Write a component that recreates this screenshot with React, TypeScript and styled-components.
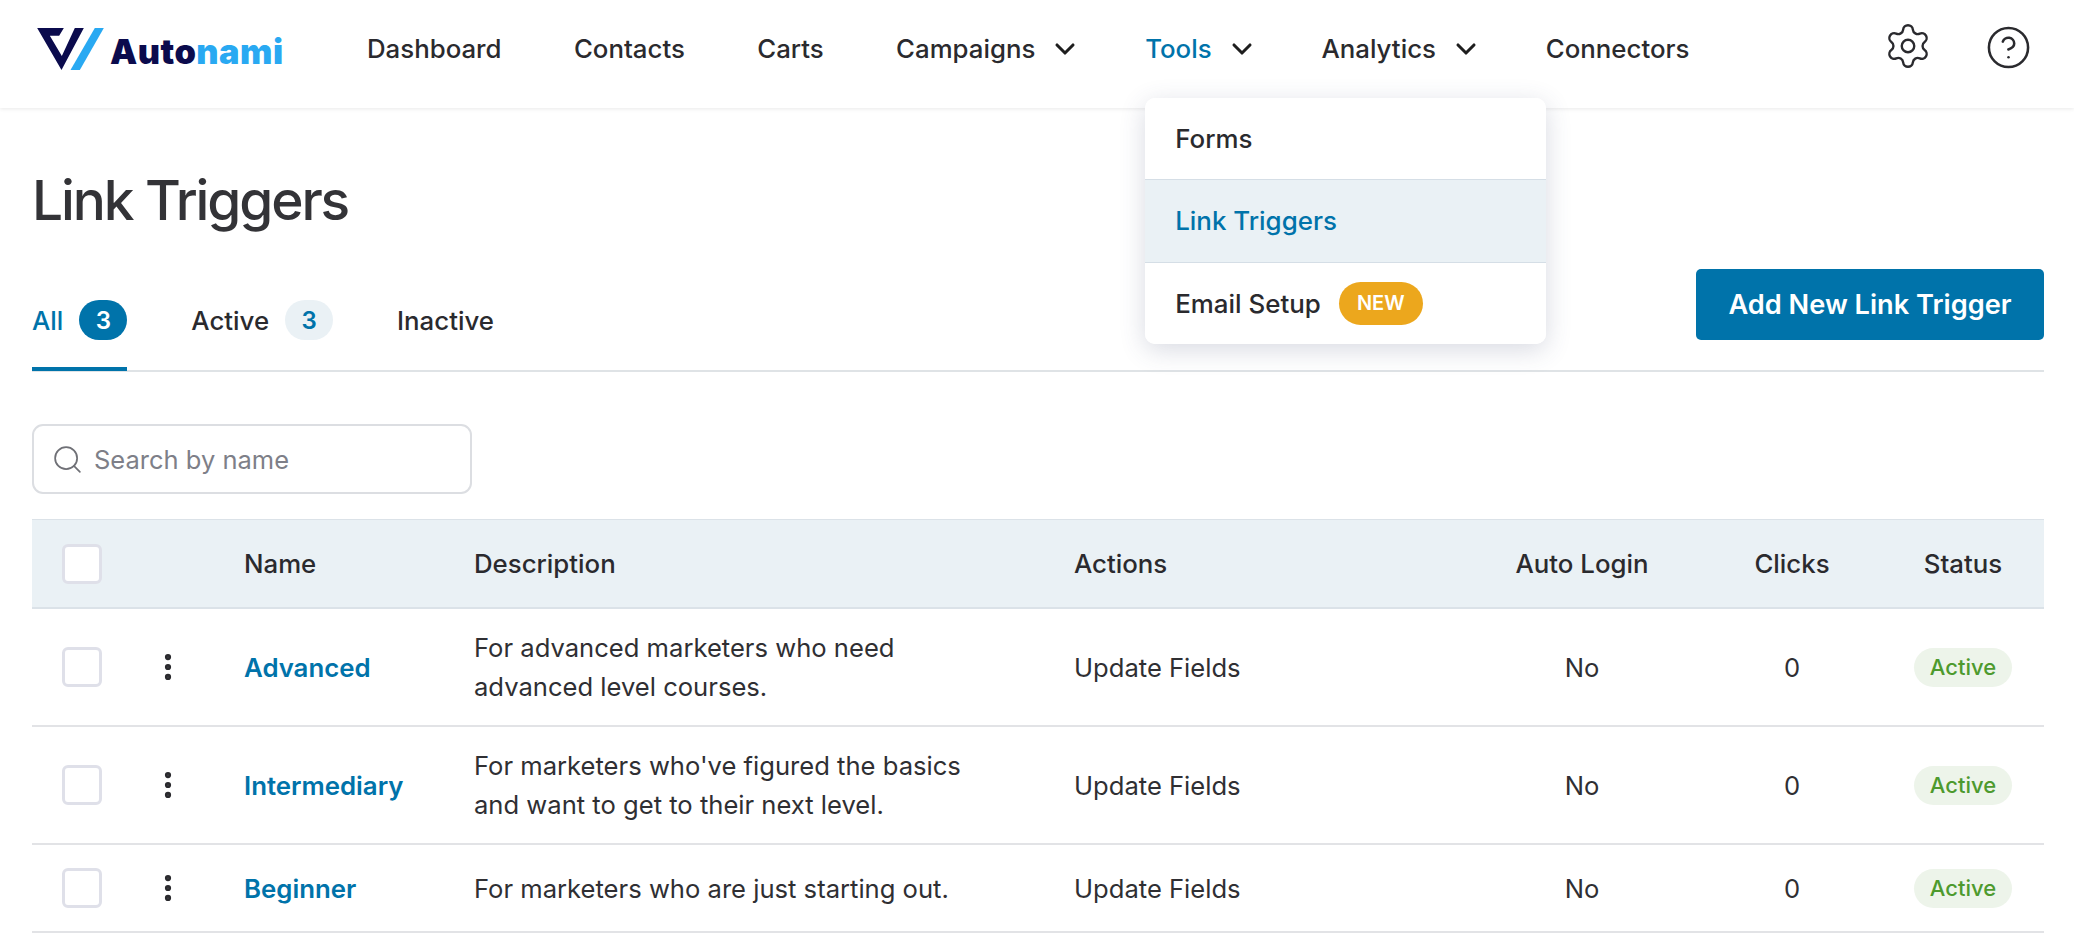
import styled, { createGlobalStyle } from 'styled-components';
import { ChevronDown, CircleHelp, EllipsisVertical, Search, Settings } from 'lucide-react';

const triggers = [
  {
    name: 'Advanced',
    lines: ['For advanced marketers who need', 'advanced level courses.'],
    height: 118,
  },
  {
    name: 'Intermediary',
    lines: ["For marketers who've figured the basics", 'and want to get to their next level.'],
    height: 118,
  },
  {
    name: 'Beginner',
    lines: ['For marketers who are just starting out.'],
    height: 88,
  },
];

const App = () => {
  return (
    <>
      <GlobalStyle />
      <Header>
        <Logo>
          <svg width="67" height="42" viewBox="22 22 200 126" aria-hidden="true">
            <path d="M22 22H102L88 45H60L96 106L135 22H162L95 148Z" fill="#0b0b4d" />
            <path d="M195 22H222L150 148H122Z" fill="#29a9f2" />
          </svg>
          <LogoText>
            Auto<LogoAccent>nami</LogoAccent>
          </LogoText>
        </Logo>
        <Nav>
          <NavItem>Dashboard</NavItem>
          <NavItem>Contacts</NavItem>
          <NavItem>Carts</NavItem>
          <NavItem>
            Campaigns
            <ChevronDown size={32} strokeWidth={2.3} color="#1e1e1e" />
          </NavItem>
          <NavItem $active>
            Tools
            <ChevronDown size={32} strokeWidth={2.3} color="#1e1e1e" />
            <Dropdown>
              <DropdownItem>Forms</DropdownItem>
              <DropdownItem $active>Link Triggers</DropdownItem>
              <DropdownItem>
                Email Setup
                <NewBadge>NEW</NewBadge>
              </DropdownItem>
            </Dropdown>
          </NavItem>
          <NavItem>
            Analytics
            <ChevronDown size={32} strokeWidth={2.3} color="#1e1e1e" />
          </NavItem>
          <NavItem>Connectors</NavItem>
        </Nav>
        <HeaderIcons>
          <Settings size={50} strokeWidth={1.15} />
          <CircleHelp size={47} strokeWidth={1.3} />
        </HeaderIcons>
      </Header>

      <Main>
        <Title>Link Triggers</Title>
        <TabBar>
          <Tabs>
            <Tab $active>
              All <Count $active>3</Count>
            </Tab>
            <Tab>
              Active <Count>3</Count>
            </Tab>
            <Tab>Inactive</Tab>
          </Tabs>
          <AddButton type="button">Add New Link Trigger</AddButton>
        </TabBar>

        <SearchBox>
          <Search size={33} strokeWidth={1.25} color="#6f7076" />
          <SearchInput placeholder="Search by name" />
        </SearchBox>

        <Table>
          <colgroup>
            <col width="98" />
            <col width="114" />
            <col width="230" />
            <col width="600" />
            <col width="400" />
            <col width="216" />
            <col width="204" />
            <col width="150" />
          </colgroup>
          <thead>
            <tr>
              <HeadCell>
                <Checkbox />
              </HeadCell>
              <HeadCell />
              <HeadCell>Name</HeadCell>
              <HeadCell>Description</HeadCell>
              <HeadCell>Actions</HeadCell>
              <HeadCell $center>Auto Login</HeadCell>
              <HeadCell $center>Clicks</HeadCell>
              <HeadCell $center>Status</HeadCell>
            </tr>
          </thead>
          <tbody>
            {triggers.map((trigger) => (
              <Row key={trigger.name} $height={trigger.height}>
                <Cell>
                  <Checkbox />
                </Cell>
                <Cell>
                  <MenuDots>
                    <EllipsisVertical size={34} strokeWidth={2.4} />
                  </MenuDots>
                </Cell>
                <Cell>
                  <NameLink>{trigger.name}</NameLink>
                </Cell>
                <Cell>
                  {trigger.lines.map((line) => (
                    <div key={line}>{line}</div>
                  ))}
                </Cell>
                <Cell>Update Fields</Cell>
                <Cell $center>No</Cell>
                <Cell $center>0</Cell>
                <Cell $center>
                  <StatusPill>Active</StatusPill>
                </Cell>
              </Row>
            ))}
          </tbody>
        </Table>
      </Main>
    </>
  );
};

export default App;

const GlobalStyle = createGlobalStyle`
  html, body {
    margin: 0;
    padding: 0;
    background: #fff;
  }

  body {
    font-family: Inter, "Liberation Sans", sans-serif;
    font-size: 25.5px;
    color: #2f2f33;
    overflow: hidden;
  }
`;

const Header = styled.header`
  display: flex;
  align-items: center;
  height: 108px;
  padding: 0 42px 0 37px;
  box-shadow: 0 1px 4px rgba(0, 0, 0, 0.09);
`;

const Logo = styled.div`
  display: flex;
  align-items: center;
  gap: 6px;
  width: 330px;
  margin-top: -10px;
`;

const LogoText = styled.span`
  font-size: 34.3px;
  font-weight: 900;
  color: #0b0b4d;
  margin-top: 4px;
  letter-spacing: 0.5px;
`;

const LogoAccent = styled.span`
  color: #29a9f2;
`;

const Nav = styled.nav`
  display: flex;
  align-items: center;
  gap: 72.4px;
  flex: 1;
`;

const NavItem = styled.div<{ $active?: boolean }>`
  position: relative;
  display: flex;
  align-items: center;
  gap: 14px;
  height: 40px;
  margin-top: -11px;
  font-size: 25.8px;
  font-weight: 500;
  color: ${(p) => (p.$active ? '#0073aa' : '#2a2a2e')};

  > svg {
    margin-right: -8.5px;
  }
`;

const Dropdown = styled.div`
  position: absolute;
  top: 69px;
  left: 0;
  z-index: 5;
  width: 401px;
  border-radius: 10px;
  background: #fff;
  overflow: hidden;
  box-shadow: 0 6px 26px rgba(60, 70, 110, 0.2);
`;

const DropdownItem = styled.div<{ $active?: boolean }>`
  display: flex;
  align-items: center;
  gap: 18px;
  height: 81.5px;
  padding-left: 30px;
  font-size: 25.9px;
  font-weight: 500;
  color: ${(p) => (p.$active ? '#0073aa' : '#2a2a2e')};
  background: ${(p) => (p.$active ? '#eaf1f5' : '#fff')};
  border-top: ${(p) => (p.$active ? '1px solid #d5dee6' : 'none')};
  border-bottom: ${(p) => (p.$active ? '1px solid #d5dee6' : 'none')};
`;

const NewBadge = styled.span`
  display: inline-flex;
  align-items: center;
  justify-content: center;
  width: 84px;
  height: 43px;
  border-radius: 22px;
  background: #eca71d;
  color: #fff;
  font-size: 20px;
  font-weight: 600;
`;

const HeaderIcons = styled.div`
  display: flex;
  align-items: center;
  gap: 52px;
  margin-top: -15px;
  color: #2a2a2e;

  > svg:first-child {
    margin-top: -2px;
  }

  > svg:last-child {
    margin-top: 2px;
  }
`;

const Main = styled.main`
  padding: 58px 30px 0 32px;
`;

const Title = styled.h1`
  margin: 0;
  height: 68px;
  line-height: 68px;
  font-size: 55px;
  font-weight: 500;
  letter-spacing: -2.1px;
  color: #333337;
`;

const TabBar = styled.div`
  display: flex;
  align-items: flex-end;
  justify-content: space-between;
  height: 136px;
  border-bottom: 2px solid #dfe3e6;
`;

const Tabs = styled.div`
  display: flex;
  gap: 64px;
`;

const Tab = styled.div<{ $active?: boolean }>`
  display: flex;
  align-items: center;
  gap: 16px;
  height: 40px;
  padding-bottom: 31px;
  margin-bottom: -1px;
  font-size: 25.8px;
  font-weight: 500;
  color: ${(p) => (p.$active ? '#0073aa' : '#2a2a2e')};
  box-shadow: ${(p) => (p.$active ? 'inset 0 -4px 0 #0073aa' : 'none')};
`;

const Count = styled.span<{ $active?: boolean }>`
  display: inline-flex;
  align-items: center;
  justify-content: center;
  width: 48px;
  height: 40px;
  border-radius: 20px;
  background: ${(p) => (p.$active ? '#0073aa' : '#eaf1f5')};
  color: ${(p) => (p.$active ? '#fff' : '#0073aa')};
  font-size: 24px;
  font-weight: 600;
`;

const AddButton = styled.button`
  width: 348px;
  height: 71px;
  margin-bottom: 30px;
  border: none;
  border-radius: 5px;
  background: #0073aa;
  color: #fff;
  font-family: inherit;
  font-size: 27.2px;
  font-weight: 600;
  cursor: pointer;
`;

const SearchBox = styled.label`
  display: flex;
  align-items: center;
  gap: 8px;
  box-sizing: border-box;
  width: 440px;
  height: 70px;
  margin-top: 52px;
  padding-left: 17px;
  border: 2px solid #dcdee2;
  border-radius: 11px;
`;

const SearchInput = styled.input`
  flex: 1;
  min-width: 0;
  border: none;
  outline: none;
  background: transparent;
  font-family: inherit;
  font-size: 25.5px;
  color: #2f2f33;

  &::placeholder {
    color: #7e7f88;
    opacity: 1;
  }
`;

const Table = styled.table`
  width: 2012px;
  margin-top: 25px;
  border-collapse: collapse;
  table-layout: fixed;
`;

const HeadCell = styled.th<{ $center?: boolean }>`
  height: 87px;
  padding: 0;
  background: #eaf1f5;
  border-top: 1px solid #dbe2e8;
  border-bottom: 2px solid #dbe2e8;
  font-weight: 500;
  font-size: 25.8px;
  color: #2a2a2e;
  text-align: ${(p) => (p.$center ? 'center' : 'left')};

  &:first-child {
    padding-left: 30px;
  }

  &:last-child {
    padding-right: 12px;
  }
`;

const Row = styled.tr<{ $height: number }>`
  height: ${(p) => p.$height}px;
  border-bottom: 2px solid #e2e3e6;
`;

const Cell = styled.td<{ $center?: boolean }>`
  padding: 0;
  line-height: 39px;
  font-size: 25.6px;
  color: #2f2f33;
  text-align: ${(p) => (p.$center ? 'center' : 'left')};
  vertical-align: middle;

  &:first-child {
    padding-left: 30px;
  }

  &:last-child {
    padding-right: 12px;
  }
`;

const Checkbox = styled.span`
  display: block;
  box-sizing: border-box;
  width: 40px;
  height: 40px;
  border: 3px solid #dfe0e9;
  border-radius: 6px;
  background: #fff;
`;

const MenuDots = styled.span`
  display: flex;
  margin-left: 21px;
  color: #2a2a2e;
`;

const NameLink = styled.a`
  font-size: 25.8px;
  font-weight: 600;
  color: #0073aa;
`;

const StatusPill = styled.span`
  display: flex;
  align-items: center;
  justify-content: center;
  width: 98px;
  height: 39px;
  margin: 0 auto;
  border-radius: 20px;
  background: #edf4ea;
  color: #4d9a2e;
  font-size: 22px;
  font-weight: 500;
`;
